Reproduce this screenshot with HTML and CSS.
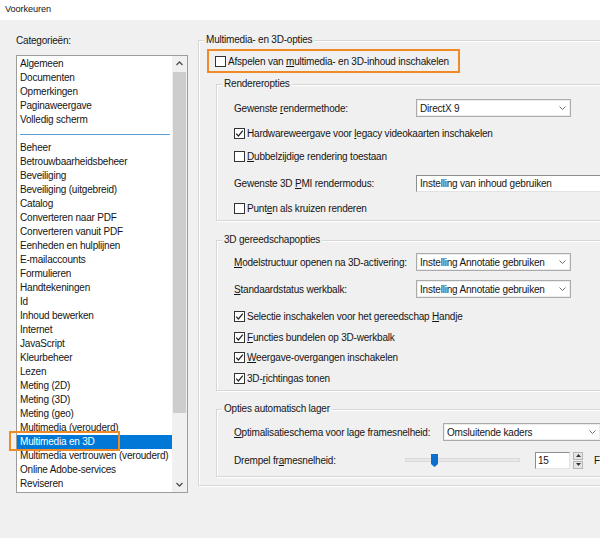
FILE: index.html
```html
<!DOCTYPE html>
<html lang="nl">
<head>
<meta charset="utf-8">
<title>Voorkeuren</title>
<link rel="stylesheet" href="styles.css">
</head>
<body>
<div class="titlebar">Voorkeuren</div>
<div class="main">
  <div class="cats">
    <div class="cats-label">Cate<u>g</u>orieën:</div>
    <div class="listbox">
      <ul class="items">
        <li>Algemeen</li>
        <li>Documenten</li>
        <li>Opmerkingen</li>
        <li>Paginaweergave</li>
        <li>Volledig scherm</li>
        <li class="sep"></li>
        <li>Beheer</li>
        <li>Betrouwbaarheidsbeheer</li>
        <li>Beveiliging</li>
        <li>Beveiliging (uitgebreid)</li>
        <li>Catalog</li>
        <li>Converteren naar PDF</li>
        <li>Converteren vanuit PDF</li>
        <li>Eenheden en hulplijnen</li>
        <li>E-mailaccounts</li>
        <li>Formulieren</li>
        <li>Handtekeningen</li>
        <li>Id</li>
        <li>Inhoud bewerken</li>
        <li>Internet</li>
        <li>JavaScript</li>
        <li>Kleurbeheer</li>
        <li>Lezen</li>
        <li>Meting (2D)</li>
        <li>Meting (3D)</li>
        <li>Meting (geo)</li>
        <li>Multimedia (verouderd)</li>
        <li class="selected"><span class="mark"></span>Multimedia en 3D</li>
        <li>Multimedia vertrouwen (verouderd)</li>
        <li>Online Adobe-services</li>
        <li>Reviseren</li>
      </ul>
      <div class="scrollbar">
        <div class="sb-btn"><svg width="7" height="5" viewBox="0 0 7 5"><polyline points="0.5,4 3.5,1 6.5,4" fill="none" stroke="#505050" stroke-width="1.3"/></svg></div>
        <div class="sb-track"><div class="sb-thumb"></div></div>
        <div class="sb-btn"><svg width="7" height="5" viewBox="0 0 7 5"><polyline points="0.5,1 3.5,4 6.5,1" fill="none" stroke="#505050" stroke-width="1.3"/></svg></div>
      </div>
    </div>
  </div>

  <div class="panel">
    <fieldset class="group outer">
      <legend>Multimedia- en 3D-opties</legend>
      <div class="hl-row">
        <div class="check"><span class="box"></span><span>Afspelen van <u>m</u>ultimedia- en 3D-inhoud inschakelen</span></div>
      </div>

      <fieldset class="group inner render">
        <legend>Rendereropties</legend>
        <div class="form-row">
          <span class="lbl">Gewenste <u>r</u>endermethode:</span>
          <div class="select"><span class="val">DirectX 9</span><span class="arrow"><svg width="7" height="4" viewBox="0 0 7 4"><polyline points="0.5,0.5 3.5,3.5 6.5,0.5" fill="none" stroke="#707070" stroke-width="1"/></svg></span></div>
        </div>
        <div class="check r-hw"><span class="box on"><svg width="9" height="9" viewBox="0 0 9 9"><polyline points="1.2,4.6 3.4,7 7.8,1.6" fill="none" stroke="#222" stroke-width="1.2"/></svg></span><span>Hardwareweergave voor <u>l</u>egacy videokaarten inschakelen</span></div>
        <div class="check r-dz"><span class="box"></span><span><u>D</u>ubbelzijdige rendering toestaan</span></div>
        <div class="form-row r-pmi">
          <span class="lbl">Gewenste 3D <u>P</u>MI rendermodus:</span>
          <div class="textfield wide">Instelling van inhoud gebruiken</div>
        </div>
        <div class="check r-pk"><span class="box"></span><span>Punt<u>e</u>n als kruizen renderen</span></div>
      </fieldset>

      <fieldset class="group inner tools">
        <legend>3D gereedschapopties</legend>
        <div class="form-row">
          <span class="lbl"><u>M</u>odelstructuur openen na 3D-activering:</span>
          <div class="select"><span class="val">Instelling Annotatie gebruiken</span><span class="arrow"><svg width="7" height="4" viewBox="0 0 7 4"><polyline points="0.5,0.5 3.5,3.5 6.5,0.5" fill="none" stroke="#707070" stroke-width="1"/></svg></span></div>
        </div>
        <div class="form-row t-std">
          <span class="lbl"><u>S</u>tandaardstatus werkbalk:</span>
          <div class="select"><span class="val">Instelling Annotatie gebruiken</span><span class="arrow"><svg width="7" height="4" viewBox="0 0 7 4"><polyline points="0.5,0.5 3.5,3.5 6.5,0.5" fill="none" stroke="#707070" stroke-width="1"/></svg></span></div>
        </div>
        <div class="check t-c1"><span class="box on"><svg width="9" height="9" viewBox="0 0 9 9"><polyline points="1.2,4.6 3.4,7 7.8,1.6" fill="none" stroke="#222" stroke-width="1.2"/></svg></span><span>Selectie inschakelen voor het gereedschap <u>H</u>andje</span></div>
        <div class="check t-c2"><span class="box on"><svg width="9" height="9" viewBox="0 0 9 9"><polyline points="1.2,4.6 3.4,7 7.8,1.6" fill="none" stroke="#222" stroke-width="1.2"/></svg></span><span><u>F</u>uncties bundelen op 3D-werkbalk</span></div>
        <div class="check t-c3"><span class="box on"><svg width="9" height="9" viewBox="0 0 9 9"><polyline points="1.2,4.6 3.4,7 7.8,1.6" fill="none" stroke="#222" stroke-width="1.2"/></svg></span><span><u>W</u>eergave-overgangen inschakelen</span></div>
        <div class="check t-c4"><span class="box on"><svg width="9" height="9" viewBox="0 0 9 9"><polyline points="1.2,4.6 3.4,7 7.8,1.6" fill="none" stroke="#222" stroke-width="1.2"/></svg></span><span>3D-<u>r</u>ichtingas tonen</span></div>
      </fieldset>

      <fieldset class="group inner auto">
        <legend>Opties automatisch lager</legend>
        <div class="flex-row">
          <span class="lbl lbl-opt"><u>O</u>ptimalisatieschema voor lage framesnelheid:</span>
          <div class="select sel-opt"><span class="val">Omsluitende kaders</span><span class="arrow"><svg width="7" height="4" viewBox="0 0 7 4"><polyline points="0.5,0.5 3.5,3.5 6.5,0.5" fill="none" stroke="#707070" stroke-width="1"/></svg></span></div>
        </div>
        <div class="flex-row a-thr">
          <span class="lbl lbl-thr">Drempel fr<u>a</u>mesnelheid:</span>
          <div class="slider"><div class="track"></div><svg class="thumb" width="7" height="13" viewBox="0 0 7 13"><polygon points="0,0 7,0 7,10 3.5,13 0,10" fill="#0a6fcf"/></svg></div>
          <div class="textfield spin">15</div>
          <div class="spinbtns">
            <span class="sbtn"><svg width="5" height="3" viewBox="0 0 5 3"><polygon points="0,3 2.5,0 5,3" fill="#333"/></svg></span>
            <span class="sbtn"><svg width="5" height="3" viewBox="0 0 5 3"><polygon points="0,0 5,0 2.5,3" fill="#333"/></svg></span>
          </div>
          <span class="unit">F</span>
        </div>
      </fieldset>
    </fieldset>
  </div>
</div>
</body>
</html>
```

FILE: styles.css
```css
* { box-sizing: border-box; }
html, body { margin: 0; padding: 0; }
body {
  width: 600px;
  height: 538px;
  overflow: hidden;
  background: #f0f0f0;
  font-family: "Liberation Sans", Arial, sans-serif;
  font-size: 10px;
  letter-spacing: -0.2px;
  color: #151515;
}
u { text-decoration: underline; text-underline-offset: 1px; }

.titlebar {
  height: 20px;
  background: #fff;
  padding-left: 5px;
  line-height: 19px;
  font-size: 9.2px;
  letter-spacing: -0.1px;
}

.main {
  display: flex;
  gap: 10px;
  padding-left: 16px;
  width: max-content;
}

/* Categories */
.cats { width: 172px; flex: none; }
.cats-label { margin-top: 14px; height: 14px; line-height: 14px; }
.listbox {
  margin-top: 7px;
  height: 438px;
  border: 1px solid #9c9c9c;
  background: #fff;
  display: flex;
}
.items {
  list-style: none;
  margin: 0;
  padding: 1px 0 0;
  flex: 1;
  min-width: 0;
}
.items li {
  height: 14px;
  line-height: 14px;
  padding-left: 3px;
  white-space: nowrap;
  position: relative;
}
.items li.sep::after {
  content: "";
  position: absolute;
  left: 3px;
  right: 2px;
  top: 7px;
  height: 1px;
  background: #5b9bd6;
}
.items li.selected { background: #0078d7; color: #fff; }
.mark {
  position: absolute;
  left: -8px;
  top: -4px;
  width: 111px;
  height: 20px;
  border: 2px solid #ef8a26;
}
.scrollbar {
  width: 15px;
  flex: none;
  display: flex;
  flex-direction: column;
  background: #f0f0f0;
}
.sb-btn { height: 15px; display: flex; align-items: center; justify-content: center; }
.sb-track { flex: 1; }
.sb-thumb { height: 341px; margin: 1px 1px 0; background: #cdcdcd; }

/* Right panel */
.panel { width: 422px; flex: none; }
fieldset.group {
  margin: 0;
  padding: 0;
  min-width: 0;
  border: 1px solid #d6d6d6;
  box-shadow: inset 1px 1px 0 #fff, 1px 1px 0 #fff;
}
fieldset.group > legend {
  margin-left: 5px;
  padding: 0 2px;
  line-height: 14px;
  height: 14px;
  background: #f0f0f0;
}
fieldset.inner > legend { margin-left: -12px; }
.outer { margin-top: 13px !important; padding-bottom: 8px !important; }

.hl-row {
  margin: 2px 0 0 8px;
  width: 253px;
  height: 24px;
  border: 2px solid #ef8a26;
  display: flex;
  align-items: center;
  padding-left: 6px;
}

.inner { margin-left: 17px !important; }
.render { margin-top: 4px !important; padding: 8px 0 4px 17px !important; }
.tools { margin-top: 12px !important; padding: 6px 0 4px 17px !important; }
.auto { margin-top: 11px !important; padding: 7px 0 7px 17px !important; }

.check {
  display: flex;
  align-items: center;
  height: 16px;
  white-space: nowrap;
}
.box {
  width: 11px;
  height: 11px;
  border: 1px solid #333;
  background: #fff;
  margin-right: 2px;
  flex: none;
  display: flex;
  align-items: center;
  justify-content: center;
}

.form-row {
  display: grid;
  grid-template-columns: 182px 155px;
  align-items: center;
}
.lbl { white-space: nowrap; }

.select {
  height: 18px;
  border: 1px solid #ababab;
  box-shadow: inset 0 0 0 1px #ececec;
  background: #fff;
  display: flex;
  align-items: center;
}
.select .val { flex: 1; padding-left: 3px; white-space: nowrap; overflow: hidden; }
.select .arrow {
  width: 13px;
  height: 100%;
  display: flex;
  align-items: center;
  justify-content: center;
  margin-right: 1px;
}

.textfield {
  height: 17px;
  line-height: 15px;
  background: #fff;
  border: 1px solid;
  border-color: #8d8d8d #e3e3e3 #e3e3e3 #8d8d8d;
  padding-left: 3px;
  white-space: nowrap;
}
.textfield.wide { width: 190px; }

.r-hw { margin-top: 8px; }
.r-dz { margin-top: 7px; }
.r-pmi { margin-top: 11px; }
.r-pk { margin-top: 8px; }

.t-std { margin-top: 9px; }
.t-c1 { margin-top: 10px; }
.t-c2 { margin-top: 5px; }
.t-c3 { margin-top: 4px; }
.t-c4 { margin-top: 5px; }

.flex-row { display: flex; align-items: center; height: 18px; }
.lbl-opt { width: 209px; flex: none; }
.sel-opt { width: 158px; flex: none; }
.a-thr { margin-top: 10px; }
.lbl-thr { width: 171px; flex: none; }
.slider { width: 115px; height: 14px; position: relative; flex: none; display: flex; align-items: center; }
.slider .track { width: 100%; height: 4px; background: #e7e7e7; border: 1px solid #dadada; }
.slider .thumb { position: absolute; left: 26px; top: 1px; }
.textfield.spin { width: 35px; margin-left: 15px; flex: none; padding-left: 2px; }
.spinbtns {
  margin-left: 3px;
  width: 10px;
  height: 17px;
  display: flex;
  flex-direction: column;
  gap: 1px;
  flex: none;
}
.sbtn {
  flex: 1;
  background: #e6e6e6;
  border: 1px solid #b5b5b5;
  display: flex;
  align-items: center;
  justify-content: center;
}
.unit { margin-left: 11px; white-space: nowrap; }
```
